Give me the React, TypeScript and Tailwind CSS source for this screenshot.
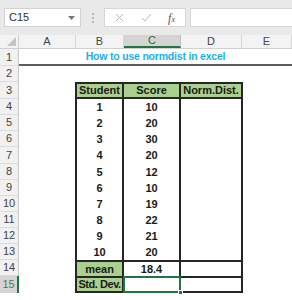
import React from "react"

const heights = ["h-[17px]", "h-[16px]", "h-[17px]", "h-[16px]", "h-[16px]", "h-[16px]", "h-[17px]", "h-[16px]", "h-[16px]", "h-[16px]", "h-[16px]", "h-[16px]", "h-[16px]", "h-[16px]", "h-[17px]"]

const data = [
  [1, 10],
  [2, 20],
  [3, 30],
  [4, 20],
  [5, 12],
  [6, 10],
  [7, 19],
  [8, 22],
  [9, 21],
  [10, 20],
]

const cols = [
  { l: "A", w: "w-[57px]" },
  { l: "B", w: "w-[48px]" },
  { l: "C", w: "w-[57px]" },
  { l: "D", w: "w-[61px]" },
  { l: "E", w: "flex-1" },
]

function FormulaBar() {
  return (
    <div className="h-[35px] bg-[#e9e9e9] flex items-start pt-[8px] pl-[4px]">
      <div className="w-[77px] h-[19px] bg-white border border-[#d2d2d2] flex items-center justify-between pl-[4px] pr-[5px]">
        <span className="text-[11px] text-[#333]">C15</span>
        <svg width="7" height="4" viewBox="0 0 7 4">
          <path d="M0 0 L7 0 L3.5 4 Z" fill="#777" />
        </svg>
      </div>
      <div className="w-[23px] h-[19px] flex flex-col items-center justify-center gap-[2px]">
        <div className="w-[2px] h-[2px] bg-[#b5b5b5]" />
        <div className="w-[2px] h-[2px] bg-[#b5b5b5]" />
        <div className="w-[2px] h-[2px] bg-[#b5b5b5]" />
      </div>
      <div className="w-[82px] h-[19px] bg-white border border-[#d6d6d6] flex items-center">
        <div className="w-[26px] flex justify-center ml-[1px]">
          <svg width="9" height="9" viewBox="0 0 9 9">
            <path d="M1 1 L8 8 M8 1 L1 8" stroke="#b8b8b8" strokeWidth="1" />
          </svg>
        </div>
        <div className="w-[28px] flex justify-center">
          <svg width="11" height="9" viewBox="0 0 11 9">
            <path d="M1 5 L4 8 L10 1" stroke="#b8b8b8" strokeWidth="1" fill="none" />
          </svg>
        </div>
        <div className="flex-1 flex justify-center items-end pr-[2px]">
          <span className="text-[12px] italic text-[#555] leading-none" style={{ fontFamily: "'Liberation Serif', serif" }}>f</span>
          <span className="text-[8px] italic text-[#555] leading-none" style={{ fontFamily: "'Liberation Serif', serif" }}>x</span>
        </div>
      </div>
      <div className="flex-1 h-[19px] bg-white border border-[#d6d6d6] ml-[4px] border-r-0" />
    </div>
  )
}

function ColumnHeaders() {
  return (
    <div className="h-[14px] flex bg-[#f3f3f3] border-b border-[#d0d0d0]">
      <div className="w-[19px] border-r border-[#d0d0d0] flex items-end justify-end pr-[2px] pb-[2px]">
        <svg width="9" height="9" viewBox="0 0 9 9">
          <path d="M9 0 L9 9 L0 9 Z" fill="#c4c4c4" />
        </svg>
      </div>
      {cols.map((c) =>
        c.l === "C" ? (
          <div key={c.l} className={`${c.w} bg-[#d4d4d4] border-r border-[#c0c0c0] border-b-2 border-b-[#217346] flex items-center justify-center text-[11px] text-[#1e6b3f]`}>
            {c.l}
          </div>
        ) : (
          <div key={c.l} className={`${c.w} border-r border-[#d6d6d6] flex items-center justify-center text-[11px] text-[#444]`}>
            {c.l}
          </div>
        )
      )}
    </div>
  )
}

function RowHeaders() {
  return (
    <div className="w-[19px] flex flex-col bg-[#f1f1f1] border-r border-[#c9c9c9]">
      {heights.map((h, i) =>
        i === 14 ? (
          <div key={i} className={`${h} bg-[#d4d4d4] border-r-2 border-[#217346] -mr-px flex items-center justify-center text-[11px] text-[#4c7a5a]`}>
            {i + 1}
          </div>
        ) : (
          <div key={i} className={`${h} border-b border-[#dcdcdc] flex items-center justify-center text-[11px] text-[#444]`}>
            {i + 1}
          </div>
        )
      )}
    </div>
  )
}

function Cell({ w, green, children, first }: { w: string; green?: boolean; children?: React.ReactNode; first?: boolean }) {
  return (
    <div
      className={`${w} ${first ? "border-l-2" : ""} border-r-2 border-[#262626] flex items-center justify-center whitespace-nowrap overflow-hidden font-bold text-[11px] text-[#1a1a1a] ${green ? "bg-[#a9d08e]" : "bg-white"}`}
    >
      {children}
    </div>
  )
}

export default function App() {
  return (
    <div className="w-[292px] h-[300px] bg-white overflow-hidden" style={{ fontFamily: "'Liberation Sans', Arial, sans-serif" }}>
      <FormulaBar />
      <ColumnHeaders />
      <div className="flex">
        <RowHeaders />
        <div className="flex-1 flex flex-col">
          <div className="h-[17px] border-b-2 border-[#5c5c5c] flex items-center justify-center">
            <span className="text-[10.5px] font-bold text-[#1ab0ec] tracking-[-0.2px]">How to use normdist in excel</span>
          </div>
          <div className="h-[16px]" />
          <div className="ml-[56px] w-[168px] flex flex-col">
            <div className="h-[17px] flex border-t-2 border-b-2 border-[#262626]">
              <Cell w="w-[49px]" green first>Student</Cell>
              <Cell w="w-[57px]" green>Score</Cell>
              <Cell w="w-[62px]" green>Norm.Dist.</Cell>
            </div>
            {data.map((d, i) => (
              <div key={i} className={`${heights[i + 3]} flex`}>
                <Cell w="w-[49px]" first>{d[0]}</Cell>
                <Cell w="w-[57px]">{d[1]}</Cell>
                <Cell w="w-[62px]" />
              </div>
            ))}
            <div className="h-[16px] flex border-t-2 border-[#262626]">
              <Cell w="w-[49px]" green first>mean</Cell>
              <Cell w="w-[57px]">18.4</Cell>
              <Cell w="w-[62px]" />
            </div>
            <div className="h-[17px] flex border-t-2 border-b-2 border-[#262626]">
              <Cell w="w-[49px]" green first>
                <span className="text-[11px] tracking-[-0.45px]">Std. Dev.</span>
              </Cell>
              <div className="w-[57px] relative border-r-2 border-[#262626] bg-white">
                <div className="absolute -top-[2px] -left-px -right-[2px] -bottom-[2px] border-2 border-[#217346]" />
                <div className="absolute -right-[4px] -bottom-[4px] w-[5px] h-[5px] bg-[#217346] border border-white" />
              </div>
              <Cell w="w-[62px]" />
            </div>
          </div>
        </div>
      </div>
    </div>
  )
}
